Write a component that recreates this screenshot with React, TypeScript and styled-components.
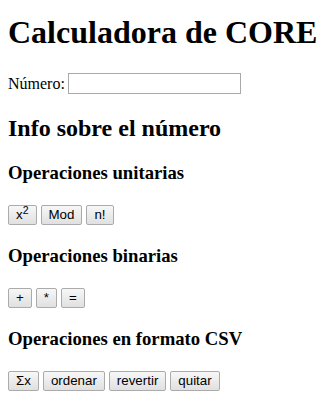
import { FC } from "react"
import styled, { createGlobalStyle } from "styled-components"

const GlobalStyle = createGlobalStyle`
  html, body {
    background: #fff;
  }
  body {
    margin: 0 8px;
    font-family: "Liberation Serif", "Times New Roman", serif;
    font-size: 16px;
    color: #000;
  }
`

const Page = styled.div`
  padding-top: 1px;
`

const Title = styled.h1`
  font-size: 32px;
  font-weight: bold;
  margin: 13px 0 21px;
`

const Field = styled.div`
  display: flex;
  align-items: center;
  gap: 3.6px;
  height: 23px;
`

const NumberInput = styled.input`
  box-sizing: border-box;
  width: 173px;
  height: 21px;
  border: 1px solid #a9a9a9;
  padding: 1px 2px;
  font-size: 13px;
  font-family: "Liberation Sans", Arial, sans-serif;
`

const SectionTitle = styled.h2`
  font-size: 24px;
  font-weight: bold;
  margin: 20px 0;
`

const SubTitle = styled.h3`
  font-size: 18.72px;
  font-weight: bold;
  margin: 18.72px 0;
`

const ButtonRow = styled.div`
  display: flex;
  gap: 4px;
  padding: 2.6px 0 1px;
`

const OpButton = styled.button`
  box-sizing: border-box;
  height: 20px;
  padding: 0 7px;
  border: 1px solid #ababab;
  border-radius: 2px;
  background: linear-gradient(#f7f7f7, #e0e0e0);
  font-family: "Liberation Sans", Arial, sans-serif;
  font-size: 13.33px;
  color: #000;
  line-height: 18px;

  sup {
    font-size: 10.5px;
    line-height: 0;
    vertical-align: 5px;
  }
`

interface GroupProps {
  title: string
  ops: React.ReactNode[]
}

const OpGroup: FC<GroupProps> = ({ title, ops }) => (
  <>
    <SubTitle>{title}</SubTitle>
    <ButtonRow>
      {ops.map((op, i) => (
        <OpButton key={i}>{op}</OpButton>
      ))}
    </ButtonRow>
  </>
)

export default function App() {
  return (
    <Page>
      <GlobalStyle />
      <Title>Calculadora de CORE</Title>
      <Field>
        <span>Número:</span>
        <NumberInput type="text" />
      </Field>
      <SectionTitle>Info sobre el número</SectionTitle>
      <OpGroup
        title="Operaciones unitarias"
        ops={[
          <>
            x<sup>2</sup>
          </>,
          "Mod",
          "n!",
        ]}
      />
      <OpGroup title="Operaciones binarias" ops={["+", "*", "="]} />
      <OpGroup
        title="Operaciones en formato CSV"
        ops={["Σx", "ordenar", "revertir", "quitar"]}
      />
    </Page>
  )
}
